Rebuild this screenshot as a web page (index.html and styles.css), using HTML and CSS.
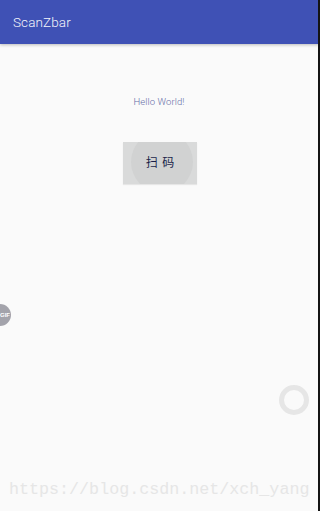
FILE: index.html
```html
<!DOCTYPE html>
<html>
<head>
<meta charset="utf-8">
<link rel="stylesheet" href="styles.css">
</head>
<body>
<div class="screen">
  <header class="toolbar"><span class="title">ScanZbar</span></header>
  <main class="content">
    <p class="hello">Hello World!</p>
    <div class="btn"><span class="ripple"></span><span class="btn-text">扫 码</span></div>
  </main>
  <div class="gif-badge"><span>GIF</span></div>
  <div class="ring"></div>
  <div class="watermark">https://blog.csdn.net/xch_yang</div>
  <div class="edge"></div>
</div>
</body>
</html>
```
FILE: styles.css
```css
* { box-sizing: border-box; }
html, body { margin: 0; padding: 0; }
body { width: 320px; height: 511px; overflow: hidden; background: #fafafa; font-family: Roboto, "Noto Sans", sans-serif; }
.screen { position: relative; width: 320px; height: 511px; background: #fafafa; }
.toolbar { height: 44px; background: #3f51b5; display: flex; align-items: center; padding-left: 13px; box-shadow: 0 1px 3px rgba(0,0,0,0.25); position: relative; z-index: 1; }
.title { color: #f4f5fb; font-size: 13.5px; font-weight: 300; letter-spacing: 0.1px; }
.content { display: flex; flex-direction: column; align-items: center; padding-top: 52px; }
.hello { margin: 0; font-size: 9.5px; font-weight: 300; color: #646ca6; line-height: 11px; letter-spacing: 0.1px; margin-right: 2px; }
.btn { margin-top: 35px; width: 74px; height: 42px; background: #d9dada; position: relative; display: flex; align-items: center; justify-content: center; overflow: hidden; box-shadow: 0 1px 1px rgba(0,0,0,0.08); }
.ripple { position: absolute; left: 8px; top: -11px; width: 62px; height: 62px; border-radius: 50%; background: #d1d2d2; }
.btn-text { position: relative; font-family: "Noto Sans CJK SC", sans-serif; font-size: 12px; color: #1a1f4a; margin-left: 1px; margin-top: -3px; letter-spacing: 1px; }
.gif-badge { position: absolute; left: -11px; top: 304px; width: 22px; height: 22px; border-radius: 50%; background: #a3a3ab; display: flex; align-items: center; justify-content: flex-end; padding-right: 1px; }
.gif-badge span { font-size: 6px; color: #ffffff; font-weight: bold; font-family: "Liberation Sans", sans-serif; }
.ring { position: absolute; left: 279px; top: 385px; width: 30px; height: 30px; border-radius: 50%; border: 5px solid #e6e6e6; }
.watermark { position: absolute; left: 9px; top: 480px; font-family: "Liberation Mono", "DejaVu Sans Mono", monospace; font-size: 16.7px; color: #e6e6e6; white-space: nowrap; }
.edge { position: absolute; right: 0; top: 0; width: 2px; height: 511px; background: #141414; z-index: 2; }
```
